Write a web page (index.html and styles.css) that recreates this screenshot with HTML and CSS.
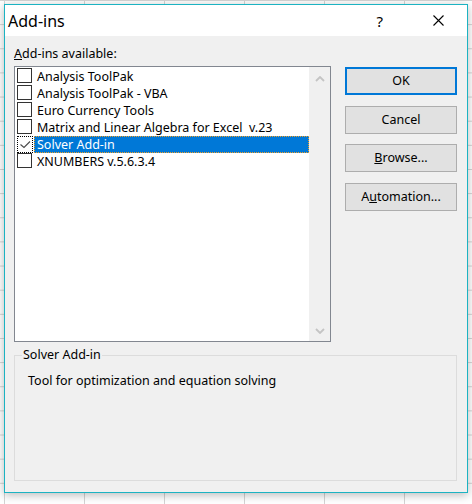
FILE: index.html
```html
<!DOCTYPE html>
<html>
<head>
<meta charset="utf-8">
<link rel="stylesheet" href="styles.css">
</head>
<body>
<div class="dialog">
  <div class="titlebar">
    <span class="title">Add-ins</span>
    <span class="help">?</span>
    <span class="close"><svg width="11" height="11" viewBox="0 0 11 11"><path d="M0.5 0.5 L10.5 10.5 M10.5 0.5 L0.5 10.5" stroke="#000" stroke-width="1.1" fill="none"/></svg></span>
  </div>
  <div class="body">
    <div class="top">
      <div class="left">
        <div class="label"><u>A</u>dd-ins available:</div>
        <div class="listbox">
          <ul class="items">
            <li class="item"><span class="cb"></span><span class="name">Analysis ToolPak</span></li>
            <li class="item"><span class="cb"></span><span class="name">Analysis ToolPak - VBA</span></li>
            <li class="item"><span class="cb"></span><span class="name">Euro Currency Tools</span></li>
            <li class="item"><span class="cb"></span><span class="name">Matrix and Linear Algebra for Excel  v.23</span></li>
            <li class="item selected"><span class="cb checked"><svg width="13" height="13" viewBox="0 0 13 13"><path d="M1.5 6.5 L5 9.5 L11 3.5" stroke="#4a4a4a" stroke-width="1.1" fill="none"/></svg></span><span class="name">Solver Add-in</span></li>
            <li class="item"><span class="cb"></span><span class="name">XNUMBERS v.5.6.3.4</span></li>
          </ul>
          <div class="scrollbar">
            <svg width="10" height="6" viewBox="0 0 10 6"><path d="M1 5 L5 1 L9 5" stroke="#c4c4c4" stroke-width="1.8" fill="none"/></svg>
            <svg width="10" height="6" viewBox="0 0 10 6"><path d="M1 1 L5 5 L9 1" stroke="#c4c4c4" stroke-width="1.8" fill="none"/></svg>
          </div>
        </div>
      </div>
      <div class="buttons">
        <div class="btn default">OK</div>
        <div class="btn">Cancel</div>
        <div class="btn"><span><u>B</u>rowse...</span></div>
        <div class="btn"><span>A<u>u</u>tomation...</span></div>
      </div>
    </div>
    <fieldset class="group">
      <legend>Solver Add-in</legend>
      <p class="desc">Tool for optimization and equation solving</p>
    </fieldset>
  </div>
</div>
</body>
</html>
```
FILE: styles.css
```css
html, body {
  margin: 0;
  padding: 0;
}
body {
  width: 472px;
  height: 504px;
  overflow: hidden;
  background-color: #ffffff;
  background-image:
    linear-gradient(#d4d4d4 1px, transparent 1px),
    linear-gradient(90deg, #d4d4d4 1px, transparent 1px);
  background-size: 80px 24.15px;
  background-position: 4px 0;
  font-family: "Noto Sans", "Open Sans", sans-serif;
  font-size: 12.5px;
  color: #000;
}
.dialog {
  position: absolute;
  left: 4px;
  top: 4px;
  width: 462px;
  height: 487px;
  border: 1px solid #1cb3c2;
  background: #f0f0f0;
  box-shadow: 0 2px 9px rgba(0, 0, 0, 0.28);
  display: flex;
  flex-direction: column;
}
.titlebar {
  height: 31px;
  background: #ffffff;
  display: flex;
  align-items: center;
  flex: none;
}
.title {
  flex: 1;
  margin-left: 3px;
  font-size: 16px;
  line-height: 20px;
  margin-top: 1px;
}
.help {
  font-size: 15px;
  line-height: 20px;
  margin-right: 50px;
  margin-top: 1px;
}
.close {
  display: flex;
  margin-right: 23px;
}
.body {
  flex: 1;
  padding: 10px 10px 0 9px;
}
.top {
  display: flex;
}
.left {
  width: 317px;
}
.label {
  line-height: 16px;
  height: 16px;
  margin-bottom: 4px;
}
.listbox {
  height: 276px;
  box-sizing: border-box;
  border: 1px solid #828790;
  background: #ffffff;
  display: flex;
}
.items {
  flex: 1;
  list-style: none;
  margin: 0;
  padding: 1px 0 0 2px;
}
.item {
  display: flex;
  align-items: flex-start;
  height: 17px;
}
.cb {
  width: 15px;
  height: 15px;
  box-sizing: border-box;
  border: 1px solid #333333;
  background: #ffffff;
  flex: none;
  display: flex;
  align-items: center;
  justify-content: center;
}
.cb.checked {
  border: 1px dotted #000000;
  width: 16px;
  height: 17px;
}
.name {
  flex: 1;
  margin-left: 2px;
  padding: 0 3px;
  height: 17px;
  line-height: 18px;
  white-space: pre;
  box-sizing: border-box;
}
.item.selected .cb + .name {
  margin-left: 1px;
}
.selected .name {
  background: #0078d7;
  color: #ffffff;
  border: 1px dotted #f0a028;
  line-height: 16px;
  padding: 0 2px;
}
.scrollbar {
  width: 21px;
  background: #f0f0f0;
  display: flex;
  flex-direction: column;
  justify-content: space-between;
  align-items: center;
  padding: 9px 0 7px;
  box-sizing: border-box;
}
.scrollbar svg {
  display: block;
}
.buttons {
  width: 112px;
  margin-left: 14px;
  padding-top: 21px;
  display: flex;
  flex-direction: column;
  gap: 10.7px;
}
.btn {
  height: 28px;
  box-sizing: border-box;
  border: 1px solid #adadad;
  background: #e1e1e1;
  display: flex;
  align-items: center;
  justify-content: center;
  line-height: 16px;
}
.btn.default {
  border: 2px solid #0078d7;
}
.group {
  margin: 5px 0 0 0;
  padding: 0 13px;
  width: 443px;
  height: 134px;
  box-sizing: border-box;
  border: 1px solid #dcdcdc;
}
.group legend {
  padding: 0 1px;
  margin-left: -6px;
  line-height: 16px;
}
.desc {
  margin: 10px 0 0;
  line-height: 16px;
}
```
